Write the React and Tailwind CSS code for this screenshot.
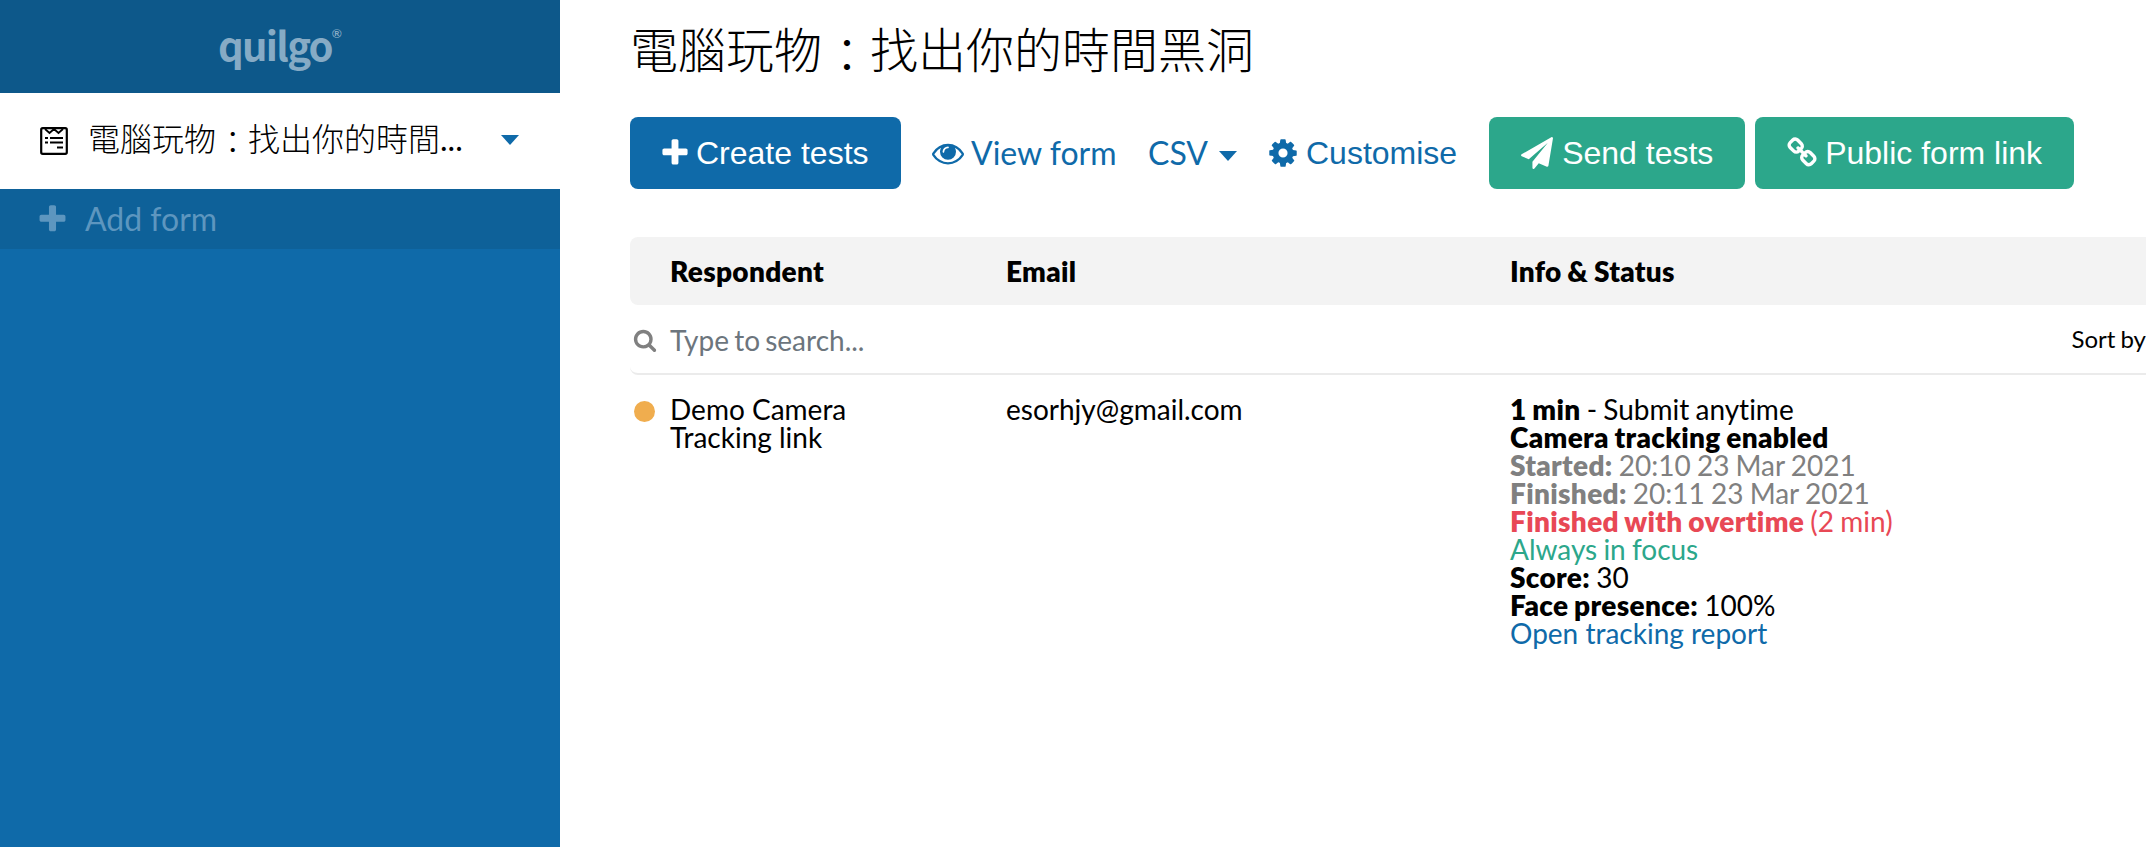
const P = {
  plus: "M1600 736v192q0 40-28 68t-68 28h-416v416q0 40-28 68t-68 28h-192q-40 0-68-28t-28-68v-416h-416q-40 0-68-28t-28-68v-192q0-40 28-68t68-28h416v-416q0-40 28-68t68-28h192q40 0 68 28t28 68v416h416q40 0 68 28t28 68z",
  eye: "M1664 960q-152-236-381-353 61 104 61 225 0 185-131.5 316.5t-316.5 131.5-316.5-131.5-131.5-316.5q0-121 61-225-229 117-381 353 133 205 333.5 326.5t434.5 121.5 434.5-121.5 333.5-326.5zm-720-384q0-20-14-34t-34-14q-125 0-214.5 89.5t-89.5 214.5q0 20 14 34t34 14 34-14 14-34q0-86 61-147t147-61q20 0 34-14t14-34zm848 384q0 34-20 69-140 230-376.5 368.5t-499.5 138.5-499.5-139-376.5-368q-20-35-20-69t20-69q140-229 376.5-368t499.5-139 499.5 139 376.5 368q20 35 20 69z",
  cog: "M1152 896q0-106-75-181t-181-75-181 75-75 181 75 181 181 75 181-75 75-181zm512-109v222q0 12-8 23t-20 13l-185 28q-19 54-39 91 35 50 107 138 10 12 10 25t-9 23q-27 37-99 108t-94 71q-12 0-26-9l-138-108q-44 23-91 38-16 136-29 186-7 28-36 28h-222q-14 0-24.5-8.5t-11.5-21.5l-28-184q-49-16-90-37l-141 107q-10 9-25 9-14 0-25-11-126-114-165-168-7-10-7-23 0-12 8-23 15-21 51-66.5t54-70.5q-27-50-41-99l-183-27q-13-2-21-12.5t-8-23.5v-222q0-12 8-23t19-13l186-28q14-46 39-92-40-57-107-138-10-12-10-24 0-10 9-23 26-36 98.5-107.5t94.5-71.5q13 0 26 10l138 107q44-23 91-38 16-136 29-186 7-28 36-28h222q14 0 24.5 8.5t11.5 21.5l28 184q49 16 90 37l142-107q9-9 24-9 13 0 25 10 129 119 165 170 7 8 7 22 0 12-8 23-15 21-51 66.5t-54 70.5q26 50 41 98l183 28q13 2 21 12.5t8 23.5z",
  plane: "M1764 11q33 24 27 64l-256 1536q-5 29-32 45-14 8-31 8-11 0-24-5l-453-185-242 295q-18 23-49 23-13 0-22-4-19-7-30.5-23.5t-11.5-36.5v-349l864-1059-1069 925-395-162q-37-14-40-55-2-40 32-59l1664-960q15-9 32-9 20 0 36 11z",
  search: "M1216 832q0-185-131.5-316.5t-316.5-131.5-316.5 131.5-131.5 316.5 131.5 316.5 316.5 131.5 316.5-131.5 131.5-316.5zm512 832q0 52-38 90t-90 38q-54 0-90-38l-343-342q-179 124-399 124-143 0-273.5-55.5t-225-150-150-225-55.5-273.5 55.5-273.5 150-225 225-150 273.5-55.5 273.5 55.5 225 150 150 225 55.5 273.5q0 220-124 399l343 343q37 37 37 90z",
  chain: "M1520 1216q0-40-28-68l-208-208q-28-28-68-28-42 0-72 32 3 3 19 18.5t21.5 21.5 15 19 13 25.5 3.5 27.5q0 40-28 68t-68 28q-15 0-27.5-3.5t-25.5-13-19-15-21.5-21.5-18.5-19q-33 31-33 73 0 40 28 68l206 207q27 27 68 27 40 0 68-26l147-146q28-28 28-67zm-703-705q0-40-28-68l-206-207q-28-28-68-28-39 0-68 27l-147 146q-28 28-28 67 0 40 28 68l208 208q27 27 68 27 42 0 72-31-3-3-19-18.5t-21.5-21.5-15-19-13-25.5-3.5-27.5q0-40 28-68t68-28q15 0 27.5 3.5t25.5 13 19 15 21.5 21.5 18.5 19q33-31 33-73zm895 705q0 120-85 203l-147 146q-83 83-203 83-121 0-204-85l-206-207q-83-83-83-203 0-123 88-209l-88-88q-86 88-208 88-120 0-204-84l-208-208q-84-84-84-204t85-203l147-146q83-83 203-83 121 0 204 85l206 207q83 83 83 203 0 123-88 209l88 88q86-88 208-88 120 0 204 84l208 208q84 84 84 204z",
};

function Icon({ name, className }) {
  return (
    <svg viewBox="0 0 1792 1792" fill="currentColor" className={"shrink-0 " + className}>
      <path d={P[name]} />
    </svg>
  );
}

function Caret({ className }) {
  return (
    <svg viewBox="0 0 18 10" fill="currentColor" className={"h-[10px] w-[18px] shrink-0 " + className}>
      <path d="M0 0h18l-9 10z" />
    </svg>
  );
}

function FormIcon() {
  return (
    <svg viewBox="0 0 28 28" fill="none" stroke="#000" className="size-[28px] shrink-0">
      <rect x="1.2" y="1.2" width="25.6" height="25.6" rx="1.5" strokeWidth="2.2" />
      <path d="M5 2l4.5 4 4.5-4 4.5 4 4.5-4" strokeWidth="1.8" />
      <path d="M5 11h3M10 11h13M5 15.500h3M10 15.500h13M17 20.500h6" strokeWidth="2" />
    </svg>
  );
}

const STRONG = "font-extrabold tracking-[0.32px]";

function Colon() {
  return <span className="relative top-[0.1em] left-[0.02em]">：</span>;
}

export default function App() {
  return (
    <div className="flex h-[847px] w-full overflow-hidden bg-white font-['Lato','Noto_Sans_CJK_TC',sans-serif] text-black [font-variant-ligatures:none]">
      <aside className="flex w-[560px] shrink-0 flex-col bg-[#0f6aa9]">
        <div className="flex h-[93px] items-start bg-[#0d588a] pt-[16px] pl-[218px] text-[#86abc5]">
          <span className="font-['Noto_Sans_CJK_TC',sans-serif] text-[40px] leading-[56px] font-bold tracking-[-1.7px]">quilgo</span>
          <span className="pt-[11px] font-['Liberation_Sans',sans-serif] text-[13px] leading-[14px] font-bold">®</span>
        </div>
        <div className="flex h-[96px] items-center bg-white pl-[40px]">
          <FormIcon />
          <span className="mt-[-5px] ml-[20px] w-[400px] text-[32px] leading-[40px] font-light whitespace-nowrap">電腦玩物<Colon />找出你的時間<span className="font-normal">...</span></span>
          <Caret className="mt-[-3px] ml-[13px] text-[#0f6aa9]" />
        </div>
        <div className="flex h-[60px] items-center bg-[#0e6199] pl-[36px] text-[#5d96bf]">
          <Icon name="plus" className="size-[33px]" />
          <span className="ml-[16px] text-[32px] leading-[40px]">Add form</span>
        </div>
      </aside>
      <main className="flex min-w-0 flex-1 flex-col pl-[70px]">
        <h1 className="mt-[15px] text-[48px] leading-[70px] font-light whitespace-nowrap">電腦玩物<Colon />找出你的時間黑洞</h1>
        <div className="mt-[32px] flex h-[72px] items-center whitespace-nowrap font-['Liberation_Sans',sans-serif] text-[32px] leading-[40px] text-[#0f6aa9]">
          <button className="flex h-[72px] w-[271px] shrink-0 items-center rounded-[8px] bg-[#0f6aa9] pl-[29px] text-white">
            <Icon name="plus" className="size-[32px]" />
            <span className="ml-[5px]">Create tests</span>
          </button>
          <a className="ml-[31px] flex w-[185px] items-center font-['Lato',sans-serif]">
            <Icon name="eye" className="size-[32px]" />
            <span className="ml-[7px]">View form</span>
          </a>
          <a className="ml-[31px] flex items-center font-['Lato',sans-serif]">
            <span>CSV</span>
            <Caret className="mt-[6px] ml-[11px]" />
          </a>
          <a className="ml-[30px] flex items-center">
            <Icon name="cog" className="size-[32px]" />
            <span className="ml-[7px]">Customise</span>
          </a>
          <button className="ml-[32px] flex h-[72px] w-[256px] shrink-0 items-center rounded-[8px] bg-[#2ca78b] pl-[32px] text-white">
            <Icon name="plane" className="size-[32px]" />
            <span className="ml-[9px]">Send tests</span>
          </button>
          <button className="ml-[10px] flex h-[72px] w-[319px] shrink-0 items-center rounded-[8px] bg-[#2ca78b] pl-[31px] text-white">
            <Icon name="chain" className="size-[32px]" />
            <span className="ml-[7px]">Public form link</span>
          </button>
        </div>
        <div className="mt-[48px] flex h-[68px] items-center rounded-l-[8px] bg-[#f3f3f3] pl-[40px] text-[28px] leading-[28px] font-extrabold tracking-[0.3px]">
          <span className="w-[336px]">Respondent</span>
          <span className="w-[504px]">Email</span>
          <span className="[word-spacing:-1px]">Info &amp; Status</span>
        </div>
        <div className="flex h-[70px] items-center rounded-bl-[8px] border-b-2 border-[#ebebeb] pl-[3px] whitespace-nowrap">
          <Icon name="search" className="mt-[2px] size-[24px] text-[#808080]" />
          <span className="mt-[2px] ml-[13px] w-[1402px] text-[28px] leading-[28px] text-[#6c757d] [word-spacing:-2px]">Type to search...</span>
          <span className="text-[24px] leading-[28px] [word-spacing:-1px]">Sort by</span>
        </div>
        <div className="mt-[20px] flex text-[28px] leading-[28px] whitespace-nowrap [word-spacing:-1px]">
          <span className="mt-[6px] ml-[4px] size-[21px] shrink-0 rounded-full bg-[#f0ad4e]" />
          <div className="ml-[15px] w-[336px] shrink-0 [word-spacing:0px]">Demo Camera<br />Tracking link</div>
          <div className="w-[504px] shrink-0">esorhjy@gmail.com</div>
          <div>
            <div><b className={STRONG}>1 min</b> - Submit anytime</div>
            <div><b className={STRONG}>Camera tracking enabled</b></div>
            <div className="text-[#808080]"><b className={STRONG}>Started:</b> 20:10 23 Mar 2021</div>
            <div className="text-[#808080]"><b className={STRONG}>Finished:</b> 20:11 23 Mar 2021</div>
            <div className="text-[#e84855]"><b className={STRONG}>Finished with overtime</b> (2 min)</div>
            <div className="text-[#2ca78b]">Always in focus</div>
            <div><b className={STRONG}>Score:</b> 30</div>
            <div><b className={STRONG}>Face presence:</b> 100%</div>
            <div className="text-[#0f6aa9] [word-spacing:0px]">Open tracking report</div>
          </div>
        </div>
      </main>
    </div>
  );
}
